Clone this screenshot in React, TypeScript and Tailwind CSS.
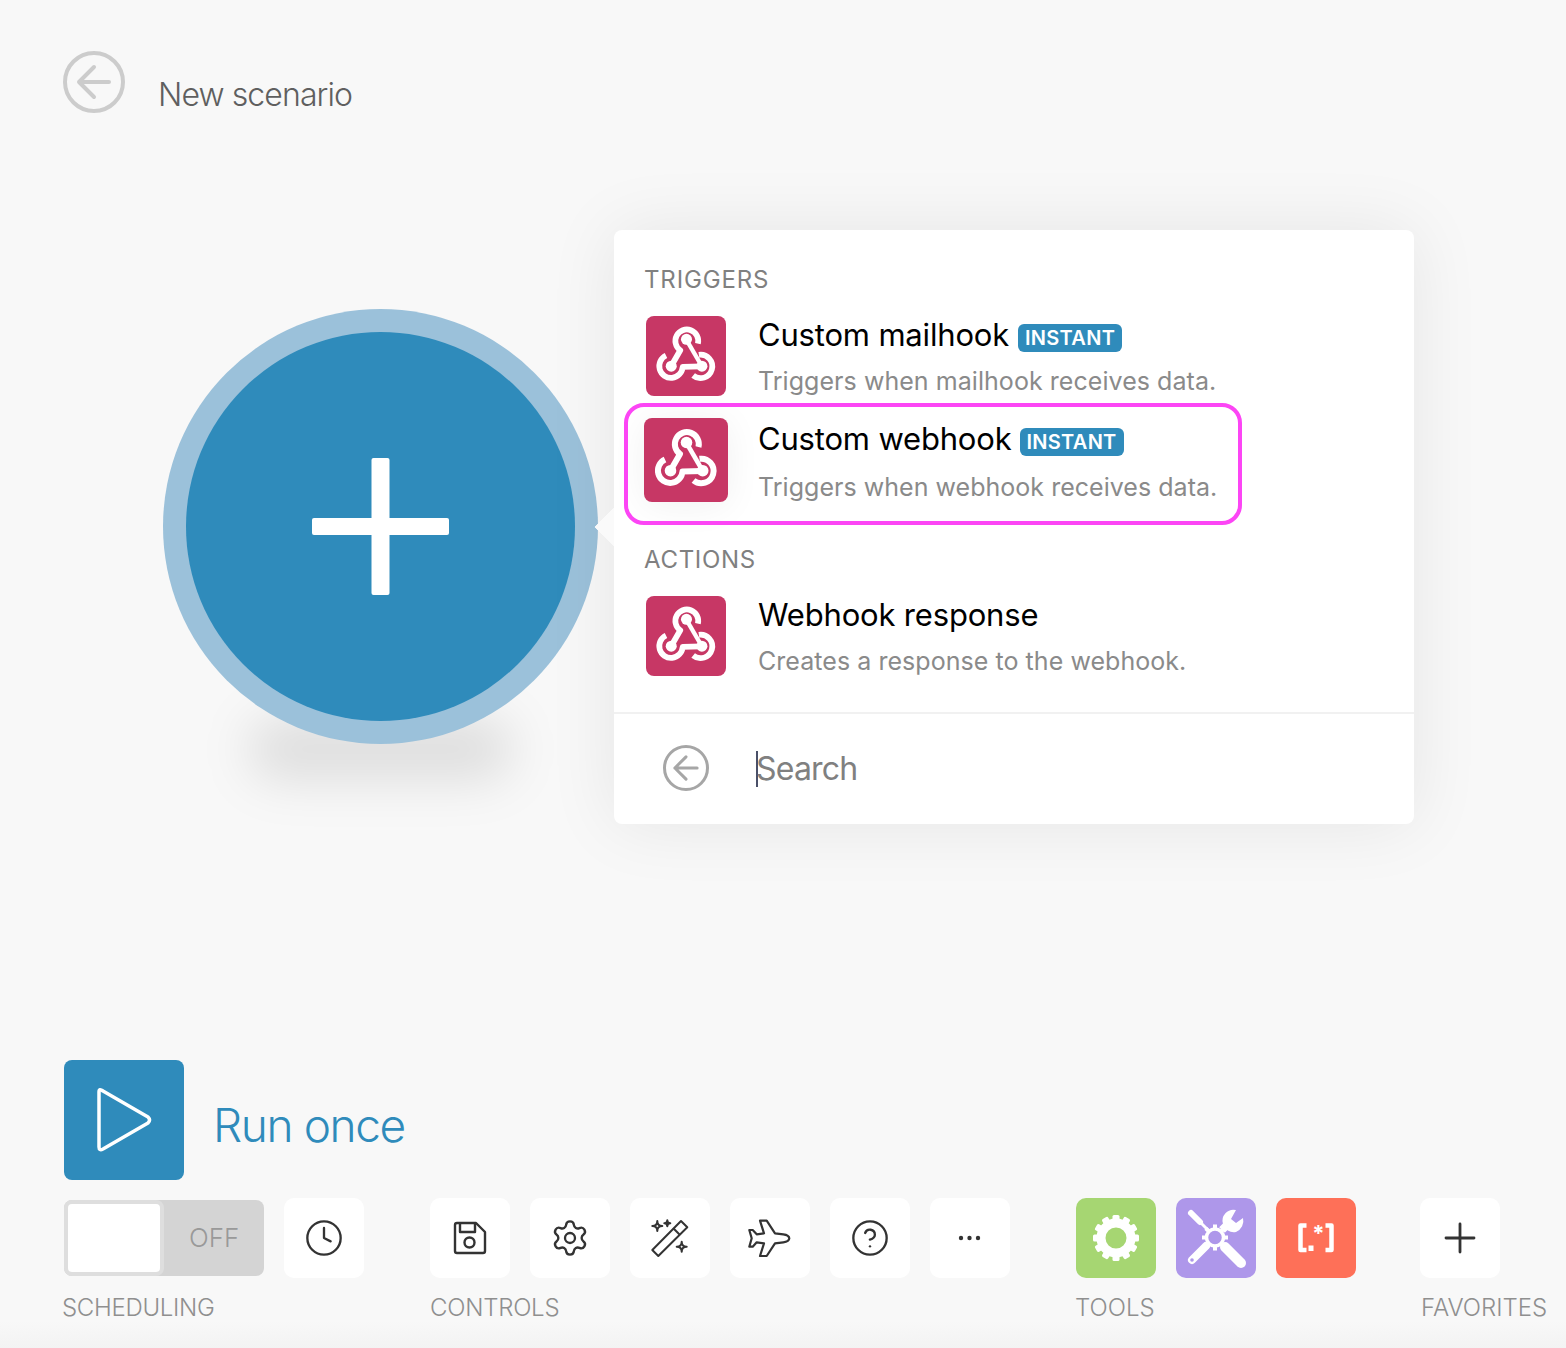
import { CircleHelp, Clock, Plus, Settings } from 'lucide-react';
import type { ReactNode } from 'react';

const WebhookIcon = ({ size }: { size: number }) => (
	<svg width={size} height={size} viewBox="-1 0 84 84" fill="none" stroke="#fff" strokeWidth="6" strokeLinejoin="round">
		<path d="M25.5 52.500 L35 36 A12 12 0 1 1 53.500 29" />
		<path d="M41.500 25 L57.500 52.500" strokeWidth="4.500" />
		<path d="M20 41.500 A12.300 12.300 0 1 0 37.500 53.500 L57.500 53" />
		<path d="M54.500 40.800 A12.300 12.300 0 1 1 48.500 62.500" />
		<circle cx="41.500" cy="24.500" r="5.800" fill="#fff" stroke="none" />
		<circle cx="25.500" cy="52.700" r="5.800" fill="#fff" stroke="none" />
		<circle cx="57.700" cy="52.700" r="5.800" fill="#fff" stroke="none" />
	</svg>
);

const BackIcon = ({ size, color, stroke }: { size: number; color: string; stroke: number }) => (
	<svg width={size} height={size} viewBox="0 0 62 62" fill="none" stroke={color} strokeWidth={(stroke * 62) / size} strokeLinecap="round" strokeLinejoin="round">
		<circle cx="31" cy="31" r={31 - (stroke * 31) / size} />
		<path d="M46 31 H16 M31 16 L16 31 L31 46" />
	</svg>
);

const Badge = () => (
	<span className="mt-[6px] flex h-[28px] w-[104px] items-center justify-center rounded-[6px] bg-[#2f8bbb] text-[20px] font-semibold tracking-[0.3px] text-white">
		INSTANT
	</span>
);

const ToolButton = ({ children, className = 'bg-white' }: { children: ReactNode; className?: string }) => (
	<div className={`flex size-[80px] items-center justify-center rounded-[10px] ${className}`}>{children}</div>
);

const SaveIcon = () => (
	<svg width="80" height="80" viewBox="0 0 80 80" fill="none" stroke="#333" strokeWidth="2.400" strokeLinejoin="round">
		<path d="M27 25 H46 L55 34 V53 A2 2 0 0 1 53 55 H27 A2 2 0 0 1 25 53 V27 A2 2 0 0 1 27 25 Z" />
		<path d="M30 25 V34 H45 V25" />
		<circle cx="39.500" cy="44.500" r="5" />
	</svg>
);

const WandIcon = () => (
	<svg width="80" height="80" viewBox="0 0 80 80" fill="none" stroke="#333" strokeWidth="2" strokeLinejoin="round">
		<path d="M22.300 52 L51 23 L57.300 29.300 L28.300 58 Z" />
		<path d="M43.300 30.300 L50 37" />
		<path d="M27.300 23 Q27.300 28 32.300 28 Q27.300 28 27.300 33 Q27.300 28 22.300 28 Q27.300 28 27.300 23 Z" />
		<path d="M37.300 22.300 Q37.300 25.300 40.300 25.300 Q37.300 25.300 37.300 28.300 Q37.300 25.300 34.300 25.300 Q37.300 25.300 37.300 22.300 Z" />
		<path d="M51.700 43.700 Q51.700 48.700 56.700 48.700 Q51.700 48.700 51.700 53.700 Q51.700 48.700 46.700 48.700 Q51.700 48.700 51.700 43.700 Z" />
	</svg>
);

const PlaneIcon = () => (
	<svg width="80" height="80" viewBox="0 0 80 80" fill="none" stroke="#333" strokeWidth="2.200" strokeLinejoin="round">
		<path d="M59.300 40.300 Q59 37 53.300 36.300 L45 35.300 L36.700 22.700 H30 L34 35.300 L26.700 36.300 L22.700 32 H19.300 L21.700 40.300 L19.300 48.700 H22.700 L26.700 44.300 L34 45.300 L30 58 H36.700 L45 45.300 L53.300 44.300 Q59 43.500 59.300 40.300 Z" />
	</svg>
);

const DotsIcon = () => (
	<svg width="80" height="80" viewBox="0 0 80 80" fill="#333">
		<circle cx="31" cy="40" r="2.200" />
		<circle cx="39.500" cy="40" r="2.200" />
		<circle cx="48" cy="40" r="2.200" />
	</svg>
);

const GearIcon = () => (
	<svg width="80" height="80" viewBox="0 0 80 80" fill="none">
		{[0, 30, 60, 90, 120, 150, 180, 210, 240, 270, 300, 330].map((deg) => (
			<rect key={deg} x="36.500" y="17" width="7" height="10" rx="1.500" fill="#fff" transform={`rotate(${deg} 40 40)`} />
		))}
		<circle cx="40" cy="40" r="15" stroke="#fff" strokeWidth="9" />
	</svg>
);

const ToolsIcon = () => (
	<svg width="80" height="80" viewBox="0 0 80 80" fill="none">
		{/* screwdriver */}
		<path d="M15 15 L33 33" stroke="#fff" strokeWidth="3" />
		<path d="M15 15 L24 24" stroke="#fff" strokeWidth="6" strokeLinecap="round" />
		{/* wrench */}
		<path d="M46 32 L52 26" stroke="#fff" strokeWidth="8" />
		<path d="M60 12 A11 11 0 0 0 47 26 A11 11 0 0 0 60 34 A12 12 0 0 0 67 20 L60 25 L55 21 Z" fill="#fff" />
		{/* gear */}
		{[0, 45, 90, 135, 180, 225, 270, 315].map((deg) => (
			<rect key={deg} x="37" y="26.500" width="4" height="5" fill="#fff" transform={`rotate(${deg} 39 39.500)`} />
		))}
		<circle cx="39" cy="39.500" r="8.500" stroke="#fff" strokeWidth="3.500" />
		{/* handles */}
		<path d="M16 62 L30 48" stroke="#fff" strokeWidth="8" strokeLinecap="round" />
		<circle cx="16" cy="62" r="1.800" fill="#ae97ea" />
		<path d="M49 49 L65 65" stroke="#fff" strokeWidth="10" strokeLinecap="round" />
	</svg>
);

const RegexIcon = () => (
	<svg width="80" height="80" viewBox="0 0 80 80" fill="#fff" fontFamily="Inter, sans-serif" fontWeight="700">
		<path d="M30.500 27.500 H24.500 V52 H30.500 M49.500 27.500 H55.500 V52 H49.500" fill="none" stroke="#fff" strokeWidth="4.500" strokeLinejoin="round" />
		<text x="42.500" y="43" fontSize="22" textAnchor="middle">*</text>
		<rect x="32.500" y="47.500" width="5" height="5.500" />
	</svg>
);

const Trigger = ({ title, description, instant }: { title: string; description: string; instant?: boolean }) => (
	<div className="flex h-[80px] gap-[32px]">
		<div className="flex size-[80px] items-center justify-center rounded-[8px] bg-[#c73765]">
			<WebhookIcon size={80} />
		</div>
		<div className="flex flex-col">
			<div className="flex h-[38px] items-center gap-[9px]">
				<span className="text-[31px] tracking-[-0.18px] text-black">{title}</span>
				{instant && <Badge />}
			</div>
			<span className="mt-[8px] text-[25px] leading-[38px] tracking-[0.05px] text-[#8a8a8a]">{description}</span>
		</div>
	</div>
);

export default function App() {
	return (
		<div className="flex h-[1348px] w-[1566px] flex-col overflow-hidden bg-[#f8f8f8] font-['Inter',sans-serif]">
			<header className="flex h-[230px] pl-[63px] pt-[51px]">
				<BackIcon size={62} color="#cccccc" stroke={4} />
				<span className="ml-[33px] mt-[24px] h-fit text-[32px] font-light leading-[40px] tracking-[-0.9px] text-[#5f5f5f]">New scenario</span>
			</header>

			<main className="flex h-[594px] pl-[163px]">
				<div className="relative mt-[79px] h-fit">
					<div className="absolute left-[85px] top-[408px] h-[64px] w-[265px] rounded-full bg-black/10 blur-xl" />
					<div className="relative flex size-[435px] items-center justify-center rounded-full bg-[#9bc1da]">
						<div className="flex size-[389px] items-center justify-center rounded-full bg-[#2f8bbb]">
							<svg width="137" height="137" viewBox="0 0 137 137" fill="#fff">
								<rect x="59.500" y="0" width="18" height="137" rx="2" />
								<rect x="0" y="60" width="137" height="17" rx="2" />
							</svg>
						</div>
					</div>
				</div>

				<div className="relative ml-[16px] h-full w-[800px]">
					<div className="relative flex h-full flex-col rounded-[8px] bg-white shadow-[0_0_70px_rgba(0,0,0,0.08)]">
						<div className="flex flex-col pl-[32px] pt-[37px]">
							<span className="-ml-[2px] text-[24px] leading-[26px] tracking-[0.85px] text-[#808080]">TRIGGERS</span>
							<div className="mt-[23px]">
								<Trigger title="Custom mailhook" description="Triggers when mailhook receives data." instant />
							</div>

							<div className="relative -ml-[2px] mt-[22px] flex h-[84px] gap-[30px]">
								<div className="absolute -left-[20px] -top-[15px] h-[122px] w-[618px] rounded-[20px] border-4 border-[#fc45f5]" />
								<div className="flex size-[84px] items-center justify-center rounded-[8px] bg-[#c73765] shadow-[0_4px_36px_rgba(0,0,0,0.06)]">
									<WebhookIcon size={84} />
								</div>
								<div className="flex flex-col">
									<div className="flex h-[42px] items-center gap-[8px]">
										<span className="text-[31px] tracking-[-0.18px] text-black">Custom webhook</span>
										<Badge />
									</div>
									<span className="mt-[8px] text-[25px] leading-[38px] tracking-[0.03px] text-[#8a8a8a]">
										Triggers when webhook receives data.
									</span>
								</div>
							</div>

							<span className="-ml-[2px] mt-[45px] text-[24px] leading-[26px] tracking-[0.7px] text-[#808080]">ACTIONS</span>
							<div className="mt-[23px]">
								<Trigger title="Webhook response" description="Creates a response to the webhook." />
							</div>
						</div>

						<div className="mt-[36px] flex h-[112px] items-center border-t-2 border-[#f1f1f1] pl-[49px]">
							<div className="mb-[2px] flex">
								<BackIcon size={46} color="#a6a6a6" stroke={3} />
							</div>
							<div className="ml-[47px] flex items-center">
								<div className="-mr-[2px] h-[36px] w-[2px] bg-[#4a5068]" />
								<span className="text-[32px] tracking-[-0.8px] text-[#808080]">Search</span>
							</div>
						</div>
					</div>
					<div className="absolute -left-[14px] top-[283px] size-[28px] rotate-45 bg-[#fafafa] [clip-path:polygon(0_0,100%_100%,0_100%)]" />
				</div>
			</main>

			<section className="ml-[64px] mt-[236px] flex items-center gap-[29px]">
				<div className="flex size-[120px] items-center justify-center rounded-[8px] bg-[#2f8bbb]">
					<svg width="120" height="120" viewBox="0 0 120 120" fill="none" stroke="#fff" strokeWidth="3.500" strokeLinejoin="round">
						<path d="M35 32 Q35 28 39 31 L84 57 Q87 60 84 63 L39 89 Q35 91 35 87 Z" />
					</svg>
				</div>
				<span className="pt-[10px] text-[46px] font-light tracking-[-1.4px] text-[#2f8bbb]">Run once</span>
			</section>

			<section className="mt-[18px] flex">
				<div className="ml-[64px] flex w-[366px] flex-col">
					<div className="flex items-center gap-[20px]">
						<div className="flex h-[76px] w-[200px] items-center rounded-[8px] bg-[#d4d4d4]">
							<div className="h-full w-[100px] rounded-[8px] border-4 border-[#dedede] bg-white" />
							<span className="mb-[2px] ml-[25px] text-[26px] font-light text-[#999]">OFF</span>
						</div>
						<ToolButton>
							<Clock size={40} strokeWidth={1.4} color="#333" />
						</ToolButton>
					</div>
					<Label className="-ml-[2px] tracking-[-0.3px]">SCHEDULING</Label>
				</div>

				<div className="flex w-[646px] flex-col">
					<div className="flex gap-[20px]">
						<ToolButton>
							<SaveIcon />
						</ToolButton>
						<ToolButton>
							<Settings size={40} strokeWidth={1.4} color="#333" />
						</ToolButton>
						<ToolButton>
							<WandIcon />
						</ToolButton>
						<ToolButton>
							<PlaneIcon />
						</ToolButton>
						<ToolButton>
							<CircleHelp size={40} strokeWidth={1.4} color="#333" />
						</ToolButton>
						<ToolButton>
							<DotsIcon />
						</ToolButton>
					</div>
					<Label>CONTROLS</Label>
				</div>

				<div className="flex w-[344px] flex-col">
					<div className="flex gap-[20px]">
						<ToolButton className="bg-[#a6d672]">
							<GearIcon />
						</ToolButton>
						<ToolButton className="bg-[#ae97ea]">
							<ToolsIcon />
						</ToolButton>
						<ToolButton className="bg-[#fe7058]">
							<RegexIcon />
						</ToolButton>
					</div>
					<Label className="-ml-[1px]">TOOLS</Label>
				</div>

				<div className="flex flex-col">
					<ToolButton>
						<Plus size={48} strokeWidth={1.4} color="#333" />
					</ToolButton>
					<Label className="ml-[1px] tracking-[0px]">FAVORITES</Label>
				</div>
			</section>

			<div className="mt-auto h-[27px] bg-gradient-to-b from-[#f8f8f8] to-[#f3f3f3]" />
		</div>
	);
}

const Label = ({ children, className = 'tracking-[-0.25px]' }: { children: ReactNode; className?: string }) => (
	<span className={`mt-[17px] whitespace-nowrap text-[24px] font-light leading-[26px] text-[#8f8f8f] ${className}`}>{children}</span>
);
